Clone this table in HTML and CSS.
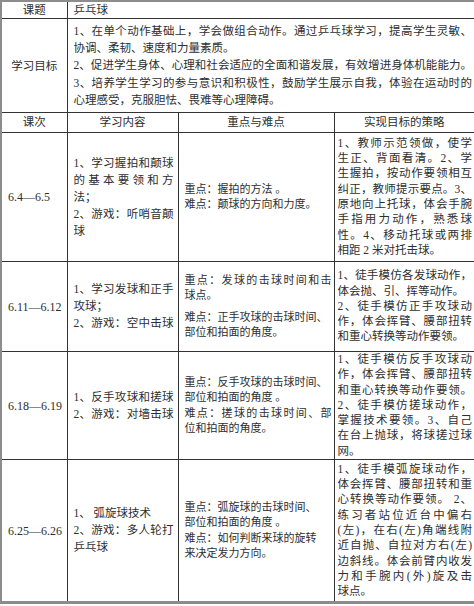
FILE: index.html
```html
<!DOCTYPE html>
<html lang="zh-CN">
<head>
<meta charset="utf-8">
<title>乒乓球 教学计划</title>
<link rel="stylesheet" href="styles.css">
</head>
<body>
<table class="plan">
  <colgroup>
    <col class="c1"><col class="c2"><col class="c3"><col class="c4">
  </colgroup>
  <tr class="r-title">
    <td class="lbl">课题</td>
    <td colspan="3" class="topic">乒乓球</td>
  </tr>
  <tr class="r-goal">
    <td class="lbl">学习目标</td>
    <td colspan="3" class="goals">
      <span class="ln j">1、在单个动作基础上，学会做组合动作。通过乒乓球学习，提高学生灵敏、</span>
      <span class="ln">协调、柔韧、速度和力量素质。</span>
      <span class="ln j">2、促进学生身体、心理和社会适应的全面和谐发展，有效增进身体机能能力。</span>
      <span class="ln j">3、培养学生学习的参与意识和积极性，鼓励学生展示自我，体验在运动时的</span>
      <span class="ln">心理感受，克服胆怯、畏难等心理障碍。</span>
    </td>
  </tr>
  <tr class="r-head">
    <td class="hd">课次</td>
    <td class="hd">学习内容</td>
    <td class="hd">重点与难点</td>
    <td class="hd">实现目标的策略</td>
  </tr>
  <tr class="r1">
    <td class="date">6.4—6.5</td>
    <td class="content">
      <span class="ln j">1、学习握拍和颠球</span>
      <span class="ln j">的基本要领和方</span>
      <span class="ln">法；</span>
      <span class="ln j">2、游戏：听哨音颠</span>
      <span class="ln">球</span>
    </td>
    <td class="key">
      <span class="ln">重点：握拍的方法 。</span>
      <span class="ln">难点：颠球的方向和力度。</span>
    </td>
    <td class="strat">
      <span class="ln j">1、教师示范领做，使学</span>
      <span class="ln j">生正、背面看清。2、学</span>
      <span class="ln j">生握拍，按动作要领相互</span>
      <span class="ln j">纠正，教师提示要点。3、</span>
      <span class="ln j">原地向上托球，体会手腕</span>
      <span class="ln j">手指用力动作，熟悉球</span>
      <span class="ln j">性。4、移动托球或两排</span>
      <span class="ln">相距 2 米对托击球。</span>
    </td>
  </tr>
  <tr class="r2">
    <td class="date">6.11—6.12</td>
    <td class="content">
      <span class="ln j">1、学习发球和正手</span>
      <span class="ln">攻球；</span>
      <span class="ln j">2、游戏：空中击球</span>
    </td>
    <td class="key">
      <span class="ln j">重点：发球的击球时间和击</span>
      <span class="ln">球点。</span>
      <span class="ln gap">难点：正手攻球的击球时间、</span>
      <span class="ln">部位和拍面的角度。</span>
    </td>
    <td class="strat">
      <span class="ln j">1、徒手模仿各发球动作，</span>
      <span class="ln">体会抛、引、挥等动作。</span>
      <span class="ln j">2、徒手模仿正手攻球动</span>
      <span class="ln j">作，体会挥臂、腰部扭转</span>
      <span class="ln">和重心转换等动作要领。</span>
    </td>
  </tr>
  <tr class="r3">
    <td class="date">6.18—6.19</td>
    <td class="content">
      <span class="ln j">1、反手攻球和搓球</span>
      <span class="ln j">2、游戏：对墙击球</span>
    </td>
    <td class="key">
      <span class="ln">重点：反手攻球的击球时间、</span>
      <span class="ln">部位和拍面的角度 。</span>
      <span class="ln j">难点：搓球的击球时间、部</span>
      <span class="ln">位和拍面的角度。</span>
    </td>
    <td class="strat">
      <span class="ln j">1、徒手模仿反手攻球动</span>
      <span class="ln j">作，体会挥臂、腰部扭转</span>
      <span class="ln j">和重心转换等动作要领。</span>
      <span class="ln j">2、徒手模仿搓球动作，</span>
      <span class="ln j">掌握技术要领。3、自己</span>
      <span class="ln j">在台上抛球，将球搓过球</span>
      <span class="ln">网。</span>
    </td>
  </tr>
  <tr class="r4">
    <td class="date">6.25—6.26</td>
    <td class="content">
      <span class="ln">1、 弧旋球技术</span>
      <span class="ln j">2、游戏：多人轮打</span>
      <span class="ln">乒乓球</span>
    </td>
    <td class="key">
      <span class="ln">重点：弧旋球的击球时间、</span>
      <span class="ln">部位和拍面的角度 。</span>
      <span class="ln">难点：如何判断来球的旋转</span>
      <span class="ln">来决定发力方向。</span>
    </td>
    <td class="strat">
      <span class="ln j">1、徒手模弧旋球动作，</span>
      <span class="ln j">体会挥臂、腰部扭转和重</span>
      <span class="ln j">心转换等动作要领。 2、</span>
      <span class="ln j">练习者站位近台中偏右</span>
      <span class="ln j">(左)，在右(左)角端线附</span>
      <span class="ln j">近自抛、自拉对方右(左)</span>
      <span class="ln j">边斜线。体会前臂内收发</span>
      <span class="ln j">力和手腕内(外)旋及击</span>
      <span class="ln">球点。</span>
    </td>
  </tr>
</table>
</body>
</html>
```

FILE: styles.css
```css
html, body {
  margin: 0;
  padding: 0;
  background: #ffffff;
}

body {
  font-family: "Liberation Serif", "Noto Sans CJK SC", serif;
  color: #2e2e2e;
}

.plan {
  border-collapse: collapse;
  table-layout: fixed;
  width: 474px;
  border-top: 2px solid #8c8c8c;
  border-left: 2px solid #8c8c8c;
  border-right: 2px solid #8c8c8c;
  border-bottom: 3px solid #8c8c8c;
}

.c1 { width: 66px; }
.c2 { width: 111px; }
.c3 { width: 156px; }
.c4 { width: 141px; }

.plan td {
  border: 1px solid #333333;
  padding: 0;
  font-size: 11.5px;
  line-height: 16px;
  vertical-align: middle;
  overflow: hidden;
}

.r-title { height: 16px; }
.r-goal { height: 94px; }
.r-head { height: 20px; }
.r1 { height: 129px; }
.r2 { height: 90px; }
.r3 { height: 107px; }
.r4 { height: 143px; }

.ln {
  display: block;
  white-space: nowrap;
}

.j {
  text-align: justify;
  text-align-last: justify;
}

.plan .lbl {
  text-align: center;
}

.plan .topic {
  padding: 0 6px;
  line-height: 14px;
}

.plan .goals {
  padding: 2px 2px 1px 6px;
  line-height: 17.2px;
}

.plan .hd {
  text-align: center;
  line-height: 17px;
}

.plan .date {
  padding-left: 6px;
  font-size: 12px;
}

.plan .content {
  padding: 0 4px 0 6px;
  line-height: 17px;
}

.plan .key {
  padding: 0 2px 0 6px;
  font-size: 11px;
  line-height: 15.5px;
}

.gap {
  margin-top: 6px;
}

.plan .strat {
  padding: 0 2px 0 3px;
  line-height: 15.3px;
}
```
